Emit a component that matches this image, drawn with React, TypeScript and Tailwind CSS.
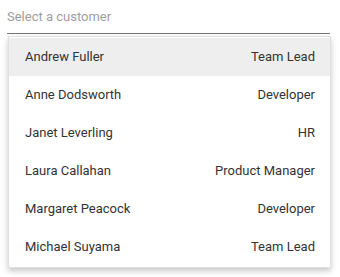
import React from 'react';

const customers = [
  { name: 'Andrew Fuller', role: 'Team Lead' },
  { name: 'Anne Dodsworth', role: 'Developer' },
  { name: 'Janet Leverling', role: 'HR' },
  { name: 'Laura Callahan', role: 'Product Manager' },
  { name: 'Margaret Peacock', role: 'Developer' },
  { name: 'Michael Suyama', role: 'Team Lead' },
];

export default function App() {
  return (
    <div className="w-[340px] h-[277px] bg-white font-['Roboto',sans-serif] text-[13px] overflow-hidden">
      {/* Input */}
      <div className="ml-[7px] w-[323px] h-[34px] pt-[7px] border-b border-[#757575] text-[#9e9e9e] leading-[20px]">
        Select a customer
      </div>

      {/* Popup */}
      <div className="ml-[8px] mt-[2px] w-[323px] bg-white border border-[#e0e0e0] shadow-[0_3px_6px_rgba(0,0,0,0.22)] py-[1px]">
        {customers.map((c, i) => (
          <div
            key={c.name}
            className={`flex items-center justify-between h-[38px] pl-[16px] pr-[15px] text-[#333] ${i === 0 ? 'bg-[#eeeeee]' : ''}`}
          >
            <span>{c.name}</span>
            <span>{c.role}</span>
          </div>
        ))}
      </div>
    </div>
  );
}
